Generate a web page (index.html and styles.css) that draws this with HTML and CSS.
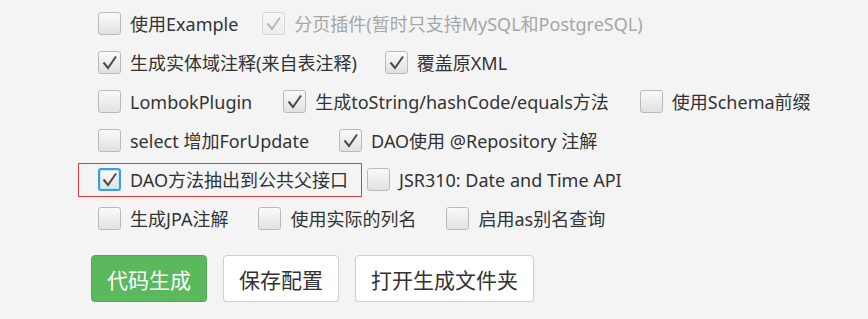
FILE: index.html
```html
<!DOCTYPE html>
<html lang="zh-CN">
<head>
<meta charset="utf-8">
<link rel="stylesheet" href="styles.css">
</head>
<body>
<div class="panel">
  <div class="row r1">
    <label class="cb"><span class="box"></span><span class="txt">使用Example</span></label>
    <label class="cb disabled"><span class="box"><svg class="tick" viewBox="0 0 23 23"><polyline points="5.5,11.5 10,17 18,5.5"/></svg></span><span class="txt">分页插件(暂时只支持MySQL和PostgreSQL)</span></label>
  </div>
  <div class="row r2">
    <label class="cb"><span class="box"><svg class="tick" viewBox="0 0 23 23"><polyline points="5.5,11.5 10,17 18,5.5"/></svg></span><span class="txt">生成实体域注释(来自表注释)</span></label>
    <label class="cb"><span class="box"><svg class="tick" viewBox="0 0 23 23"><polyline points="5.5,11.5 10,17 18,5.5"/></svg></span><span class="txt">覆盖原XML</span></label>
  </div>
  <div class="row r3">
    <label class="cb"><span class="box"></span><span class="txt">LombokPlugin</span></label>
    <label class="cb"><span class="box"><svg class="tick" viewBox="0 0 23 23"><polyline points="5.5,11.5 10,17 18,5.5"/></svg></span><span class="txt">生成toString/hashCode/equals方法</span></label>
    <label class="cb"><span class="box"></span><span class="txt">使用Schema前缀</span></label>
  </div>
  <div class="row r4">
    <label class="cb"><span class="box"></span><span class="txt">select 增加ForUpdate</span></label>
    <label class="cb"><span class="box"><svg class="tick" viewBox="0 0 23 23"><polyline points="5.5,11.5 10,17 18,5.5"/></svg></span><span class="txt">DAO使用 @Repository 注解</span></label>
  </div>
  <div class="row r5">
    <label class="cb highlight"><span class="box focused"><svg class="tick" viewBox="0 0 23 23"><polyline points="5.5,11.5 10,17 18,5.5"/></svg></span><span class="txt">DAO方法抽出到公共父接口</span></label>
    <label class="cb"><span class="box"></span><span class="txt">JSR310: Date and Time API</span></label>
  </div>
  <div class="row r6">
    <label class="cb"><span class="box"></span><span class="txt">生成JPA注解</span></label>
    <label class="cb"><span class="box"></span><span class="txt">使用实际的列名</span></label>
    <label class="cb"><span class="box"></span><span class="txt">启用as别名查询</span></label>
  </div>
  <div class="buttons">
    <button class="btn btn-success">代码生成</button>
    <button class="btn">保存配置</button>
    <button class="btn">打开生成文件夹</button>
  </div>
</div>
</body>
</html>
```
FILE: styles.css
```css
html, body {
  margin: 0;
  padding: 0;
  background: #f4f4f4;
}
body {
  font-family: "Noto Sans", "Noto Sans CJK SC", sans-serif;
  color: #333;
  font-size: 18px;
}
.panel {
  padding: 4px 0 0 98px;
}
.row {
  display: flex;
  align-items: center;
  gap: 28px;
  height: 39px;
}
.r1 { gap: 24px; }
.r2 { gap: 28px; }
.r3 { gap: 31px; }
.r4 { gap: 30px; }
.r5 { gap: 31px; }
.r6 { gap: 30px; }
.cb {
  display: flex;
  align-items: center;
  gap: 9px;
  line-height: 22px;
  white-space: nowrap;
}
.box {
  box-sizing: border-box;
  width: 23px;
  height: 23px;
  border: 1px solid #bababa;
  border-radius: 3px;
  background: linear-gradient(#fafafa, #e1e1e1);
  position: relative;
  flex: none;
}
.tick {
  position: absolute;
  left: -1px;
  top: -1px;
  width: 23px;
  height: 23px;
}
.tick polyline {
  fill: none;
  stroke: #4c4c4c;
  stroke-width: 2;
  stroke-linejoin: miter;
}
.disabled { color: #a6a6a6; }
.disabled .box { border-color: #d8d8d8; background: linear-gradient(#f7f7f7, #ededed); }
.disabled .tick polyline { stroke: #b9b9b9; }
.box.focused {
  border: 2px solid #3b9fdc;
  box-shadow: inset 0 0 0 1px #c6e3f5;
}
.box.focused .tick { left: -2px; top: -2px; }
.highlight {
  height: 34px;
  box-sizing: border-box;
  margin-left: -20px;
  padding: 0 13px 0 19px;
  border: 1px solid #e8393c;
  margin-right: -26px;
}
.buttons {
  display: flex;
  gap: 16px;
  margin: 17px 0 0 -7px;
}
.btn {
  font-family: "Noto Sans CJK SC", sans-serif;
  font-size: 21px;
  color: #333;
  background: #fff;
  border: 1px solid #cfcfcf;
  border-radius: 4px;
  height: 47px;
  padding: 0 15px;
  box-shadow: 0 1px 1px rgba(0,0,0,0.08);
}
.btn-success {
  background: #5cb85c;
  border-color: #4cae4c;
  color: #fff;
}
```
